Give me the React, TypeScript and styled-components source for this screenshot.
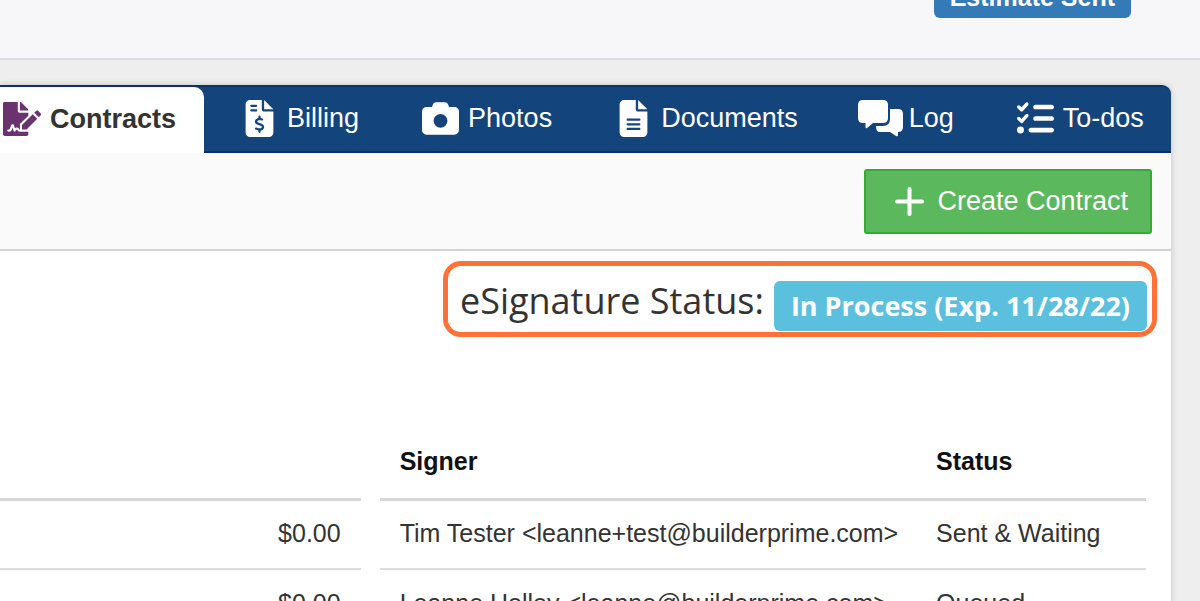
import React from "react";
import styled, { createGlobalStyle } from "styled-components";
import { FaFileSignature } from "react-icons/fa";
import { FaFileInvoiceDollar, FaCamera, FaFileLines, FaListCheck } from "react-icons/fa6";

const sans = '"Liberation Sans", Arial, sans-serif';
const open = '"Open Sans", sans-serif';

const GlobalStyle = createGlobalStyle`
  *, *::before, *::after { box-sizing: border-box; }
  body {
    margin: 0;
    background: #eeeeee;
    color: #333;
    font-family: ${sans};
    font-size: 27px;
    overflow: hidden;
  }
`;

const Page = styled.div`
  height: 100vh;
  overflow: hidden;
`;

const Header = styled.header`
  display: flex;
  justify-content: flex-end;
  height: 60px;
  padding-right: 69px;
  background: #f7f7f9;
  border-bottom: 2px solid #dadce6;
`;

const StageLabel = styled.span`
  align-self: flex-start;
  margin-top: -26px;
  padding: 9px 16px 7px;
  border-radius: 6px;
  background: #337ab7;
  color: #fff;
  font-weight: 700;
  font-size: 25px;
  line-height: 28px;
`;

const Card = styled.main`
  margin: 25px 29px 0 0;
  background: #fff;
  border-radius: 0 9px 0 0;
  box-shadow: 0 0 6px rgba(0, 0, 0, 0.2);
`;

const Tabs = styled.nav`
  display: flex;
  height: 68px;
  border-top: 2px solid #0a3168;
  border-bottom: 2px solid #0b2d6b;
  border-radius: 0 9px 0 0;
  background: #14447c;
`;

const Tab = styled.a<{ $active?: boolean; $tight?: boolean }>`
  display: flex;
  align-items: center;
  gap: ${(p) => (p.$tight ? 5 : 9)}px;
  margin-bottom: -2px;
  padding: ${(p) => (p.$active ? "0 28px 2px 3px" : p.$tight ? "0 26px 4px 34px" : "0 26px 4px 37px")};
  border-radius: 0 10px 0 0;
  background: ${(p) => (p.$active ? "#fff" : "transparent")};
  color: ${(p) => (p.$active ? "#333" : "#fff")};
  font-weight: ${(p) => (p.$active ? 700 : 400)};
  text-decoration: none;
  white-space: nowrap;
  svg { flex: none; }
`;

const Toolbar = styled.div`
  display: flex;
  justify-content: flex-end;
  padding: 16px 19px 15px;
  background: #fafafa;
  border-bottom: 2px solid #d3d3d3;
`;

const CreateButton = styled.button`
  display: flex;
  align-items: center;
  gap: 13px;
  height: 65px;
  padding: 0 22px 0 29px;
  border: 2px solid #35ab35;
  border-radius: 3px;
  background: #5cb85c;
  color: #fff;
  font: 27px ${sans};
`;

const StatusRow = styled.section`
  display: flex;
  justify-content: flex-end;
  padding: 10px 14px 0 0;
`;

const StatusBox = styled.div`
  display: flex;
  align-items: flex-start;
  gap: 10px;
  height: 76px;
  padding: 15px 5px 0 12px;
  border: 5px solid #ff7135;
  border-radius: 18px;
  font-family: ${open};
`;

const StatusTitle = styled.h2`
  margin: 0;
  font-size: 36px;
  font-weight: 400;
  line-height: 40px;
`;

const StatusBadge = styled.span`
  height: 50px;
  padding: 0 17px;
  border-radius: 6px;
  background: #5bc0de;
  color: #fff;
  font-size: 27px;
  font-weight: 700;
  line-height: 50px;
`;

const Tables = styled.section`
  display: flex;
  align-items: flex-start;
  gap: 19px;
  padding: 89px 25px 0 0;
`;

const DataTable = styled.table<{ $width: string }>`
  width: ${(p) => p.$width};
  table-layout: fixed;
  border-collapse: collapse;
  font-size: 25px;
  th, td {
    height: 70px;
    padding: 0 20px 2px;
    text-align: left;
    white-space: nowrap;
    border-bottom: 2px solid #dedede;
  }
  th {
    height: 73px;
    padding-bottom: 0;
    border-bottom: 3px solid #d8d8d8;
    color: #111;
  }
`;

const Money = styled.td`
  && { text-align: right; }
`;

const NameCol = styled.col`
  width: 70%;
`;

const CommentsIcon = () => (
  <svg width="46" height="37" viewBox="0 0 46 37" fill="#fff" aria-hidden="true">
    <path d="M5 0h20q5 0 5 5v13q0 5-5 5H15l-6 5q-1.500 1-1.500-1v-4H5q-5 0-5-5V5q0-5 5-5z" />
    <path d="M32 9h8q5 0 5 5v13q0 5-5 5v3q0 2-2 1l-6-4H22q-4 0-4-6h7q7 0 7-7z" />
  </svg>
);

const PlusIcon = () => (
  <svg width="29" height="29" viewBox="0 0 29 29" stroke="#fff" strokeWidth="4" strokeLinecap="round" aria-hidden="true">
    <path d="M14.500 2v25M2 14.500h25" />
  </svg>
);

const signers = [
  ["Tim Tester <leanne+test@builderprime.com>", "Sent & Waiting"],
  ["Leanne Holley <leanne@builderprime.com>", "Queued"],
];

export default function App() {
  return (
    <Page>
      <GlobalStyle />
      <Header><StageLabel>Estimate Sent</StageLabel></Header>
      <Card>
        <Tabs>
          <Tab href="#contracts" $active><FaFileSignature color="#6a3370" size={38} />Contracts</Tab>
          <Tab href="#billing"><FaFileInvoiceDollar size={37} />Billing</Tab>
          <Tab href="#photos"><FaCamera size={37} />Photos</Tab>
          <Tab href="#documents"><FaFileLines size={37} />Documents</Tab>
          <Tab href="#log" $tight><CommentsIcon />Log</Tab>
          <Tab href="#todos"><FaListCheck size={37} />To-dos</Tab>
        </Tabs>
        <Toolbar><CreateButton type="button"><PlusIcon />Create Contract</CreateButton></Toolbar>
        <StatusRow>
          <StatusBox>
            <StatusTitle>eSignature Status:</StatusTitle>
            <StatusBadge>In Process (Exp. 11/28/22)</StatusBadge>
          </StatusBox>
        </StatusRow>
        <Tables>
          <DataTable $width="32%">
            <thead><tr><th /></tr></thead>
            <tbody><tr><Money>$0.00</Money></tr><tr><Money>$0.00</Money></tr></tbody>
          </DataTable>
          <DataTable $width="68%">
            <colgroup><NameCol /><col /></colgroup>
            <thead><tr><th>Signer</th><th>Status</th></tr></thead>
            <tbody>
              {signers.map(([name, status]) => <tr key={name}><td>{name}</td><td>{status}</td></tr>)}
            </tbody>
          </DataTable>
        </Tables>
      </Card>
    </Page>
  );
}
